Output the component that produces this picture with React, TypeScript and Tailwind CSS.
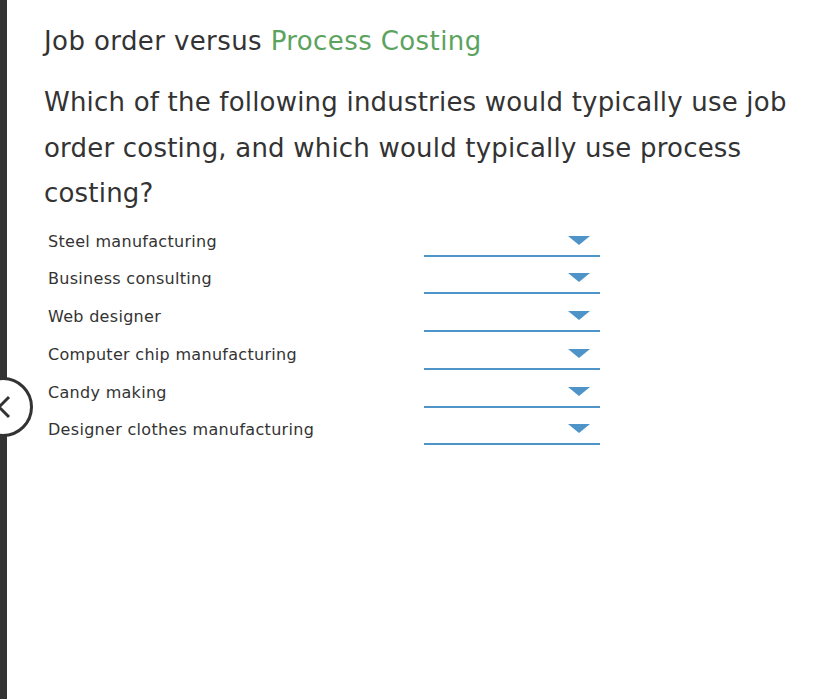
import React from "react";

const rows = [
  "Steel manufacturing",
  "Business consulting",
  "Web designer",
  "Computer chip manufacturing",
  "Candy making",
  "Designer clothes manufacturing",
];

function Caret() {
  return (
    <svg width="22" height="9" viewBox="0 0 22 9" className="block">
      <polygon points="0,0 22,0 11,9" fill="#4f94c9" />
    </svg>
  );
}

export default function App() {
  return (
    <div
      className="relative flex h-[699px] w-[828px] overflow-hidden bg-white text-[#333]"
      style={{ fontFamily: '"DejaVu Sans", Verdana, sans-serif' }}
    >
      <div className="w-[7px] shrink-0 bg-[#333]" />

      {/* back button on the edge */}
      <div className="absolute left-[-27px] top-[377px] flex h-[60px] w-[60px] items-center justify-center rounded-full border-[3px] border-[#333] bg-white">
        <svg width="14" height="24" viewBox="0 0 14 24" className="ml-[1px]">
          <polyline points="12,2 2,12 12,22" fill="none" stroke="#333" strokeWidth="3" />
        </svg>
      </div>

      <div className="flex flex-col pl-[37px] pt-[23px]">
        <h1 className="text-[26px] leading-[36px] tracking-[0.4px]">
          Job order versus <span className="text-[#5ba35e]">Process Costing</span>
        </h1>

        <p className="mt-[21px] w-[760px] text-[26px] leading-[45.5px] tracking-[0.2px]">
          Which of the following industries would typically use job order costing, and which would
          typically use process costing?
        </p>

        <div className="mt-[13px] flex flex-col">
          {rows.map((r) => (
            <div key={r} className="flex h-[37.8px] items-start">
              <div className="w-[380px] pl-[4px] text-[16px] leading-[24px] tracking-[0.3px]">{r}</div>
              <div className="flex w-[176px] flex-col pt-[6px]">
                <div className="flex justify-end pr-[10px]">
                  <Caret />
                </div>
                <div className="mt-[10px] h-[2px] bg-[#4f94c9]" />
              </div>
            </div>
          ))}
        </div>
      </div>
    </div>
  );
}
